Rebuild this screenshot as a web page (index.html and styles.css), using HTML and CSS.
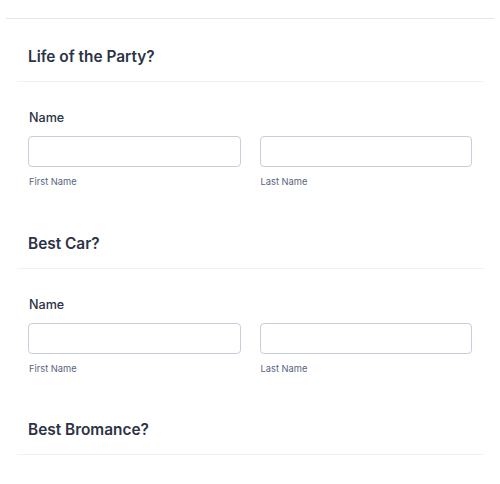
FILE: index.html
```html
<!DOCTYPE html>
<html>
<head>
<meta charset="utf-8">
<link rel="stylesheet" href="styles.css">
</head>
<body>
<div class="page">
  <div class="top-line"></div>
  <div class="form">
    <div class="section">
      <div class="heading">Life of the Party?</div>
      <div class="field">
        <div class="label">Name</div>
        <div class="row">
          <div class="col"><input class="input" type="text"><div class="sub">First Name</div></div>
          <div class="col"><input class="input" type="text"><div class="sub">Last Name</div></div>
        </div>
      </div>
    </div>
    <div class="section">
      <div class="heading">Best Car?</div>
      <div class="field">
        <div class="label">Name</div>
        <div class="row">
          <div class="col"><input class="input" type="text"><div class="sub">First Name</div></div>
          <div class="col"><input class="input" type="text"><div class="sub">Last Name</div></div>
        </div>
      </div>
    </div>
    <div class="section">
      <div class="heading">Best Bromance?</div>
    </div>
  </div>
</div>
</body>
</html>
```
FILE: styles.css
```css
html, body {
  margin: 0;
  padding: 0;
  background: #ffffff;
}
body {
  font-family: Inter, "Noto Sans", sans-serif;
  color: #2c3345;
}
.page {
  padding-top: 18px;
}
.top-line {
  height: 1px;
  margin: 0 6px;
  background: #e3e5ee;
}
.form {
  margin: 0 17px;
  padding-top: 25px;
}
.section {
  display: flex;
  flex-direction: column;
}
.heading {
  font-size: 15.4px;
  font-weight: 600;
  line-height: 25px;
  padding: 0 11px 12px;
  border-bottom: 1px solid #f1f1f4;
}
.field {
  padding: 26px 11px 41.5px;
}
.label {
  font-size: 12.6px;
  font-weight: 500;
  line-height: 20px;
  margin-bottom: 8px;
  padding-left: 1px;
}
.row {
  display: flex;
  gap: 19px;
}
.col {
  flex: 1;
  display: flex;
  flex-direction: column;
}
.input {
  box-sizing: border-box;
  height: 31px;
  width: 100%;
  margin: 0;
  border: 1px solid #c8ccdc;
  border-radius: 4px;
  background: #fff;
}
.sub {
  font-size: 9.3px;
  line-height: 14px;
  margin-top: 8px;
  padding-left: 1px;
  color: #57647e;
}
```
